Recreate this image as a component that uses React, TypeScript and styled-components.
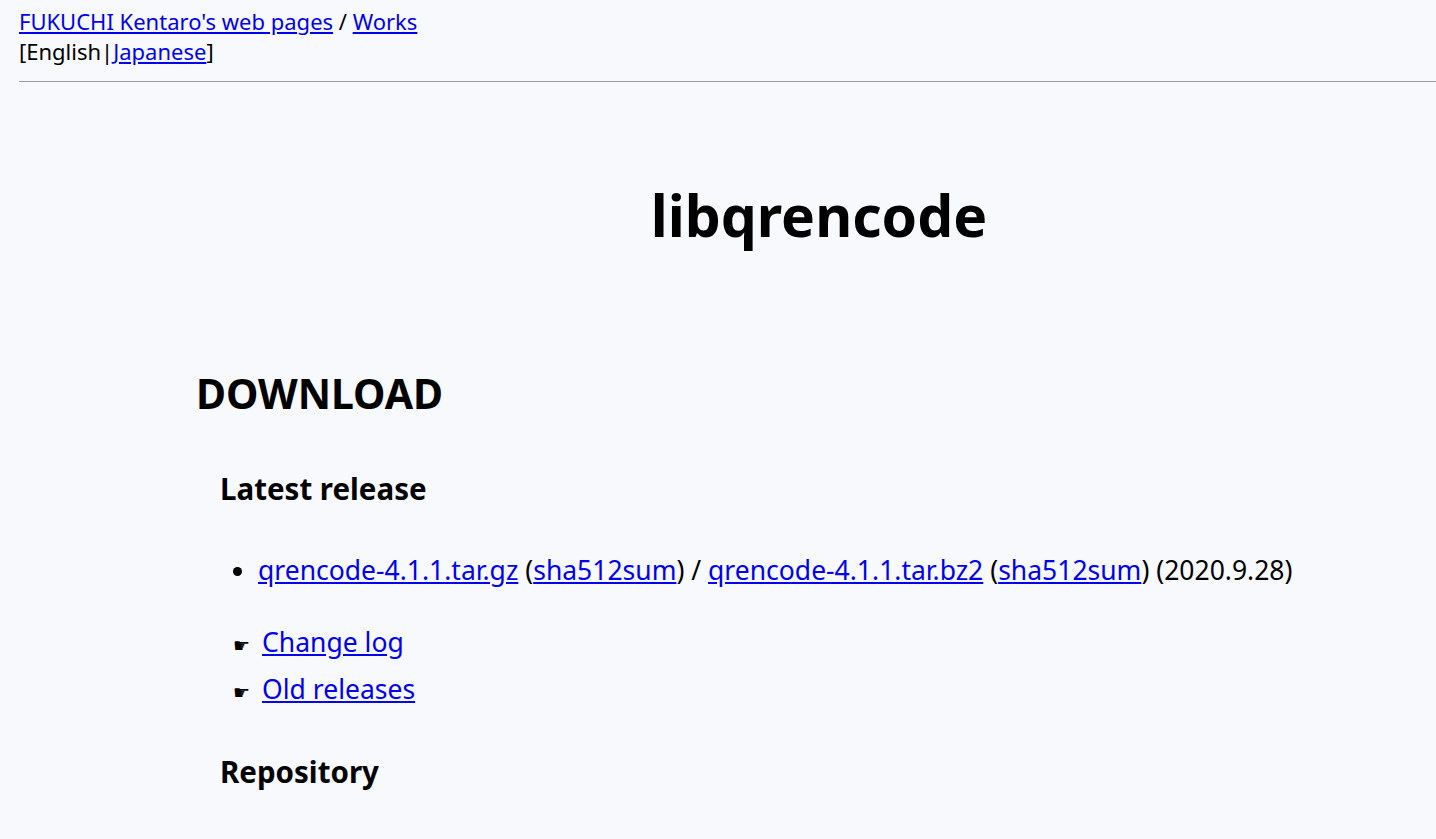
import React from "react";
import styled, { createGlobalStyle } from "styled-components";

const Global = createGlobalStyle`
  html, body { margin: 0; padding: 0; background: #f8f9fc; }
  body { font-family: "Noto Sans", "Open Sans", sans-serif; color: #000; overflow: hidden; }
  a { color: #0000ee; }
`;

const Page = styled.div`
  padding: 6px 0 0 19px;
`;

const Nav = styled.div`
  font-size: 22px;
  line-height: 30px;
`;

const Rule = styled.hr`
  margin: 15px 0 0 0;
  border: 0;
  border-top: 1px solid #9a9a9a;
  height: 0;
`;

const Main = styled.main`
  padding-left: 177px;
`;

const Title = styled.h1`
  margin: 93px 0 0 0;
  font-size: 57px;
  line-height: 80px;
  font-weight: 700;
  text-align: center;
  padding-left: 6px;
`;

const H2 = styled.h2`
  margin: 113px 0 0 0;
  font-size: 41px;
  line-height: 50px;
  font-weight: 700;
`;

const Section = styled.section`
  padding-left: 24px;
`;

const H3 = styled.h3<{ $top: number }>`
  margin: ${(p) => p.$top}px 0 0 0;
  font-size: 29.5px;
  line-height: 40px;
  font-weight: 700;
`;

const Bullets = styled.ul`
  margin: 44px 0 0 0;
  padding-left: 38px;
  font-size: 26.5px;
  line-height: 34px;
`;

const Pointers = styled.ul`
  list-style: none;
  margin: 32px 0 0 0;
  padding-left: 13px;
  font-size: 26.5px;
  line-height: 47px;
`;

const Pointer = styled.li`
  height: 47px;
`;

const Hand = styled.span`
  font-family: "DejaVu Sans", sans-serif;
  font-size: 19px;
  margin-right: 12px;
`;

export default function App() {
  return (
    <>
      <Global />
      <Page>
        <Nav>
          <div>
            <a href="#">FUKUCHI Kentaro's web pages</a> / <a href="#">Works</a>
          </div>
          <div>
            [English|<a href="#">Japanese</a>]
          </div>
        </Nav>
        <Rule />
        <Main>
          <Title>libqrencode</Title>
          <H2>DOWNLOAD</H2>
          <Section>
            <H3 $top={51}>Latest release</H3>
            <Bullets>
              <li>
                <a href="#">qrencode-4.1.1.tar.gz</a> (<a href="#">sha512sum</a>) /{" "}
                <a href="#">qrencode-4.1.1.tar.bz2</a> (<a href="#">sha512sum</a>) (2020.9.28)
              </li>
            </Bullets>
            <Pointers>
              <Pointer>
                <Hand>☛</Hand>
                <a href="#">Change log</a>
              </Pointer>
              <Pointer>
                <Hand>☛</Hand>
                <a href="#">Old releases</a>
              </Pointer>
            </Pointers>
            <H3 $top={39}>Repository</H3>
          </Section>
        </Main>
      </Page>
    </>
  );
}
